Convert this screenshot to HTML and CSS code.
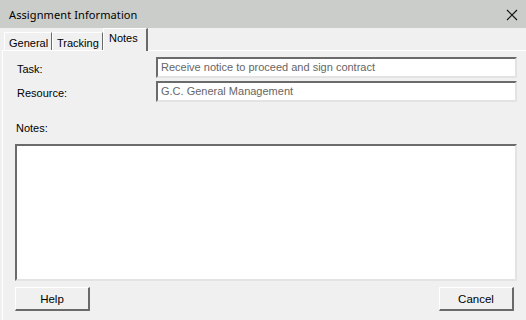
FILE: index.html
```html
<!DOCTYPE html>
<html>
<head>
<meta charset="utf-8">
<link rel="stylesheet" href="styles.css">
</head>
<body>
<div class="dialog">
  <div class="titlebar">
    <span class="title">Assignment Information</span>
    <svg class="close" width="12" height="12" viewBox="0 0 12 12"><path d="M1 1 L11 11 M11 1 L1 11" stroke="#111" stroke-width="1.1" fill="none"/></svg>
  </div>
  <div class="tabs">
    <div class="tab tab-general">General</div>
    <div class="tab tab-tracking">Tracking</div>
    <div class="tab tab-notes selected">Notes</div>
  </div>
  <div class="page">
    <div class="form">
      <div class="label">Task:</div>
      <div class="field">Receive notice to proceed and sign contract</div>
      <div class="label">Resource:</div>
      <div class="field">G.C. General Management</div>
    </div>
    <div class="notes-label">Notes:</div>
    <div class="notes"></div>
    <div class="buttons">
      <div class="btn">Help</div>
      <div class="btn">Cancel</div>
    </div>
  </div>
</div>
</body>
</html>
```
FILE: styles.css
```css
html, body {
  margin: 0;
  padding: 0;
}
body {
  width: 526px;
  height: 320px;
  overflow: hidden;
  background: #f0f0f0;
  font-family: "Liberation Sans", Arial, sans-serif;
  font-size: 11px;
  color: #000;
}
.dialog {
  width: 526px;
  height: 320px;
  display: flex;
  flex-direction: column;
}
.titlebar {
  height: 28px;
  background: #cbcdca;
  display: flex;
  align-items: center;
  justify-content: space-between;
  padding: 0 8px 0 9px;
}
.title {
  font-family: "Noto Sans", sans-serif;
  font-size: 11px;
  color: #000;
  letter-spacing: 0.1px;
}
.close {
  margin-top: 1px;
}
.tabs {
  height: 22px;
  display: flex;
  align-items: flex-end;
  padding-left: 4px;
  position: relative;
  z-index: 1;
}
.tab {
  height: 18px;
  box-sizing: border-box;
  border-top: 1px solid #fff;
  border-left: 1px solid #fff;
  border-right: 1px solid #6a6a6a;
  padding: 3px 0 0 4px;
  line-height: 14px;
  background: #f0f0f0;
  font-size: 11px;
  white-space: nowrap;
}
.tab-general { width: 48px; }
.tab-tracking { width: 51px; }
.tab.selected {
  height: 23px;
  width: 45px;
  margin-bottom: -1px;
  padding-top: 2px;
  padding-left: 5px;
  border-right: 2px solid #6a6a6a;
}
.page {
  flex: 1;
  margin-left: 2px;
  border-top: 1px solid #fff;
  border-left: 1px solid #fff;
  padding: 6px 0 0 12px;
}
.form {
  display: grid;
  grid-template-columns: 141px 361px;
  row-gap: 3px;
  align-items: center;
}
.label {
  padding-left: 2px;
  padding-top: 2px;
  font-size: 11px;
}
.field {
  height: 21px;
  box-sizing: border-box;
  background: #fff;
  border-top: 2px solid #6b6b6b;
  border-left: 2px solid #6b6b6b;
  border-right: 2px solid #e3e3e3;
  border-bottom: 2px solid #e3e3e3;
  color: #666;
  padding: 1px 3px 0 3px;
  line-height: 15px;
  font-size: 11px;
  white-space: nowrap;
  overflow: hidden;
}
.notes-label {
  margin-top: 20px;
  padding-left: 1px;
  height: 16px;
  font-size: 11px;
}
.notes {
  margin-top: 6px;
  width: 502px;
  height: 137px;
  box-sizing: border-box;
  background: #fff;
  border-top: 2px solid #6b6b6b;
  border-left: 2px solid #6b6b6b;
  border-right: 2px solid #e3e3e3;
  border-bottom: 2px solid #e3e3e3;
}
.buttons {
  margin-top: 6px;
  width: 499px;
  display: flex;
  justify-content: space-between;
}
.btn {
  width: 75px;
  height: 24px;
  box-sizing: border-box;
  border-top: 1px solid #fff;
  border-left: 1px solid #fff;
  border-right: 2px solid #6a6a6a;
  border-bottom: 2px solid #6a6a6a;
  background: #f0f0f0;
  display: flex;
  align-items: center;
  justify-content: center;
  font-size: 11.5px;
}
```
